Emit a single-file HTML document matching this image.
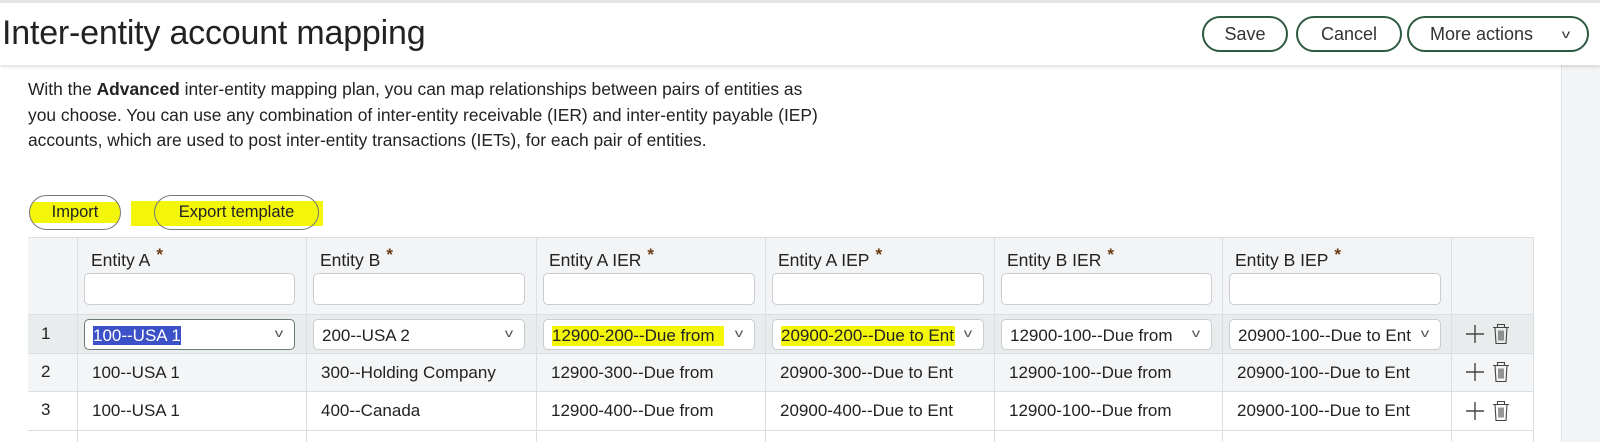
<!DOCTYPE html>
<html><head><meta charset="utf-8"><style>
*{box-sizing:border-box;margin:0;padding:0}
body{width:1600px;height:442px;overflow:hidden;background:#fff;font-family:"Liberation Sans",sans-serif;color:#222;position:relative}
.top{position:absolute;left:0;top:0;width:1600px;height:3px;background:#e3e6e8}
.hdr{position:absolute;left:0;top:3px;width:1600px;height:62px;background:#fff;box-shadow:0 2px 3px rgba(0,0,0,.12);z-index:2}
h1{position:absolute;left:2px;top:11px;font-size:34px;font-weight:normal;color:#222;letter-spacing:-0.2px}
.btn{position:absolute;border:2px solid #2d5a41;border-radius:20px;background:#fff;font-size:18px;color:#333;display:flex;align-items:center;justify-content:center}
.side{position:absolute;left:1561px;top:65px;width:39px;height:377px;background:#f3f4f5;border-left:1px solid #dfe2e4}
p{position:absolute;left:28px;top:77px;width:830px;font-size:17.4px;line-height:25.5px;color:#222}
.pb{position:absolute;border:1px solid #777;border-radius:18px;font-size:16.5px;display:flex;align-items:center;justify-content:center;color:#222}
.hl{background:#f4f60a}
.col{position:absolute;top:237px;height:205px;border-left:1px solid #dcdfe2}
.row{position:absolute;left:28px;width:1505px;border-bottom:1px solid #dcdfe2}
.th{position:absolute;top:250px;font-size:17.5px;color:#222}
.th b{color:#6b3a12;font-weight:bold;position:relative;top:-6px;margin-left:6px;font-size:17px}
.inp{position:absolute;top:273px;height:32px;background:#fff;border:1px solid #c9cdd1;border-radius:5px}
.sel{position:absolute;top:319px;height:31px;background:#fff;border:1px solid #c9cdd1;border-radius:5px;font-size:17px;padding:6px 0 0 8px;white-space:nowrap;overflow:hidden}
.sel i{position:absolute;right:12px;top:6px;font-style:normal;font-size:12px;color:#555;transform:scaleX(1.4)}
.cell{position:absolute;font-size:17px;white-space:nowrap;overflow:hidden}
.num{position:absolute;left:41px;font-size:17px}
</style></head><body>
<div class="top"></div>
<div class="hdr">
<h1>Inter-entity account mapping</h1>
<div class="btn" style="left:1202px;top:13px;width:86px;height:36px">Save</div>
<div class="btn" style="left:1296px;top:13px;width:106px;height:36px">Cancel</div>
<div class="btn" style="left:1407px;top:13px;width:182px;height:36px;justify-content:flex-start;padding-left:21px">More actions<span style="position:absolute;right:18px;font-size:12px;transform:scaleX(1.4)">v</span></div>
</div>
<div class="side"></div>
<p>With the <b>Advanced</b> inter-entity mapping plan, you can map relationships between pairs of entities as<br>you choose. You can use any combination of inter-entity receivable (IER) and inter-entity payable (IEP)<br>accounts, which are used to post inter-entity transactions (IETs), for each pair of entities.</p>
<div class="pb" style="left:29px;top:195px;width:92px;height:35px;background:linear-gradient(#fff 0,#fff 6px,#f4f60a 6px,#f4f60a 27px,#fff 27px)">Import</div>
<div style="position:absolute;left:131px;top:201px;width:192px;height:25px" class="hl"></div>
<div class="pb" style="left:154px;top:195px;width:165px;height:35px;background:transparent">Export template</div>

<div class="row" style="top:237px;height:78px;background:#f2f4f5;border-top:1px solid #dcdfe2"></div>
<div class="row" style="top:315px;height:39px;background:#e9eced"></div>
<div class="row" style="top:354px;height:38px;background:#f4f5f6"></div>
<div class="row" style="top:392px;height:39px;background:#fff"></div>

<div class="col" style="left:77px"></div><div class="col" style="left:306px"></div><div class="col" style="left:536px"></div><div class="col" style="left:765px"></div><div class="col" style="left:994px"></div><div class="col" style="left:1222px"></div><div class="col" style="left:1451px"></div><div class="col" style="left:1533px"></div>

<div class="th" style="left:91px">Entity A<b>*</b></div>
<div class="th" style="left:320px">Entity B<b>*</b></div>
<div class="th" style="left:549px">Entity A IER<b>*</b></div>
<div class="th" style="left:778px">Entity A IEP<b>*</b></div>
<div class="th" style="left:1007px">Entity B IER<b>*</b></div>
<div class="th" style="left:1235px">Entity B IEP<b>*</b></div>
<div class="inp" style="left:84px;width:211px"></div><div class="inp" style="left:313px;width:212px"></div><div class="inp" style="left:543px;width:212px"></div><div class="inp" style="left:772px;width:212px"></div><div class="inp" style="left:1001px;width:211px"></div><div class="inp" style="left:1229px;width:212px"></div>

<div class="num" style="top:324px">1</div><div class="num" style="top:362px">2</div><div class="num" style="top:400px">3</div>
<div class="sel" style="left:84px;width:211px;border-color:#6e7a74"><span style="background:#3c50c8;color:#fff">100--USA 1</span><i>v</i></div>
<div class="sel" style="left:313px;width:212px">200--USA 2<i>v</i></div>
<div class="sel" style="left:543px;width:212px"><span class="hl" style="display:inline-block;width:172px;overflow:hidden">12900-200--Due from</span><i>v</i></div>
<div class="sel" style="left:772px;width:212px"><span class="hl" style="display:inline-block;width:174px;overflow:hidden">20900-200--Due to Entity</span><i>v</i></div>
<div class="sel" style="left:1001px;width:211px"><span style="display:inline-block;width:172px;overflow:hidden">12900-100--Due from</span><i>v</i></div>
<div class="sel" style="left:1229px;width:212px"><span style="display:inline-block;width:174px;overflow:hidden">20900-100--Due to Entity</span><i>v</i></div>

<div class="cell" style="left:92px;top:363px">100--USA 1</div>
<div class="cell" style="left:321px;top:363px;width:176px">300--Holding Company</div>
<div class="cell" style="left:551px;top:363px;width:172px">12900-300--Due from</div>
<div class="cell" style="left:780px;top:363px;width:174px">20900-300--Due to Entity</div>
<div class="cell" style="left:1009px;top:363px;width:172px">12900-100--Due from</div>
<div class="cell" style="left:1237px;top:363px;width:174px">20900-100--Due to Entity</div>
<div class="cell" style="left:92px;top:401px">100--USA 1</div>
<div class="cell" style="left:321px;top:401px">400--Canada</div>
<div class="cell" style="left:551px;top:401px;width:172px">12900-400--Due from</div>
<div class="cell" style="left:780px;top:401px;width:174px">20900-400--Due to Entity</div>
<div class="cell" style="left:1009px;top:401px;width:172px">12900-100--Due from</div>
<div class="cell" style="left:1237px;top:401px;width:174px">20900-100--Due to Entity</div>

<svg style="position:absolute;left:1465px;top:0" width="60" height="442" fill="none" stroke="#444" stroke-width="1.4">
<g><path d="M1 334h18M10 325v18"/><path d="M28 327.5h16M32.5 327.5v-3h7v3M30 327.5l1 16h10l1-16M34 330.5v10M36 330.5v10M38 330.5v10" stroke-width="1.1"/></g>
<g transform="translate(0,38)"><path d="M1 334h18M10 325v18"/><path d="M28 327.5h16M32.5 327.5v-3h7v3M30 327.5l1 16h10l1-16M34 330.5v10M36 330.5v10M38 330.5v10" stroke-width="1.1"/></g>
<g transform="translate(0,77)"><path d="M1 334h18M10 325v18"/><path d="M28 327.5h16M32.5 327.5v-3h7v3M30 327.5l1 16h10l1-16M34 330.5v10M36 330.5v10M38 330.5v10" stroke-width="1.1"/></g>
</svg>
</body></html>
